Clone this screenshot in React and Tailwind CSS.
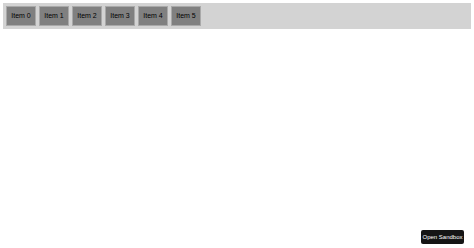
const items = ['Item 0', 'Item 1', 'Item 2', 'Item 3', 'Item 4', 'Item 5'];

export default function App() {
  return (
    <div className="relative h-[248px] w-[474px] bg-white font-['Liberation_Sans',Arial,sans-serif]">
      <div className="mx-[3px] mt-[3px] flex h-[26px] gap-[3px] bg-[#d3d3d3] p-[3px]">
        {items.map((label) => (
          <div
            key={label}
            className="flex h-[20px] w-[30px] items-center justify-center border border-[#a9a9a9] bg-[#808080] text-[7px] text-black"
          >
            {label}
          </div>
        ))}
      </div>
      <button className="absolute left-[421px] top-[227px] flex h-[14px] w-[43px] items-center justify-center rounded-[2px] bg-[#151515] text-[6px] text-white">
        Open Sandbox
      </button>
    </div>
  );
}
